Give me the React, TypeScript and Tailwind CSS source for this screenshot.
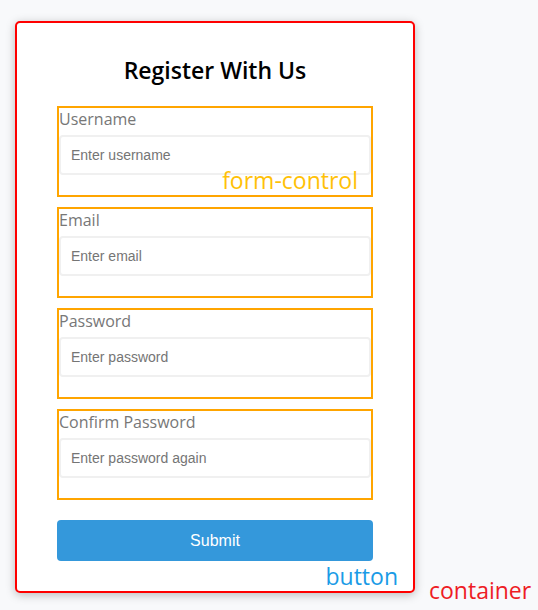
import React from 'react';

const fields = [
  { label: 'Username', placeholder: 'Enter username', type: 'text' },
  { label: 'Email', placeholder: 'Enter email', type: 'email' },
  { label: 'Password', placeholder: 'Enter password', type: 'password' },
  { label: 'Confirm Password', placeholder: 'Enter password again', type: 'password' },
];

const openSans = { fontFamily: '"Open Sans", "Noto Sans", sans-serif' };

function FormControl({
  label,
  placeholder,
  type,
  note,
}: {
  label: string;
  placeholder: string;
  type: string;
  note?: boolean;
}) {
  return (
    <div className="relative flex flex-col gap-[5px] border-2 border-[#ffa500] pb-[20px]">
      <label className="text-[16px] leading-[22px] text-[#777]" style={openSans}>
        {label}
      </label>
      <input
        type={type}
        placeholder={placeholder}
        className="h-[40px] w-full rounded-[4px] border-2 border-[#f0f0f0] px-[10px] font-['Liberation_Sans',Arial,sans-serif] text-[14px] text-[#333] outline-none placeholder:text-[#757575]"
      />
      {note && (
        <span
          className="absolute right-[13px] bottom-0 text-[23px] leading-[30px] text-[#ffc107]"
          style={openSans}
        >
          form-control
        </span>
      )}
    </div>
  );
}

export default function App() {
  return (
    <div className="relative flex min-h-[610px] w-full items-start bg-[#f8f9fb] pt-[21px] pl-[15px]">
      <div className="relative flex w-[400px] flex-col rounded-[5px] border-2 border-[#ff0000] bg-white px-[40px] pt-[30px] pb-[30px] shadow-[0_2px_10px_rgba(0,0,0,0.25)]">
        <h2
          className="mb-[19px] text-center text-[23px] leading-[34px] font-semibold text-black"
          style={openSans}
        >
          Register With Us
        </h2>
        <form className="flex flex-col gap-[10px]" onSubmit={(e) => e.preventDefault()}>
          {fields.map((f, i) => (
            <FormControl key={f.label} {...f} note={i === 0} />
          ))}
          <button
            type="submit"
            className="mt-[10px] h-[41px] w-full rounded-[4px] bg-[#3498db] font-['Liberation_Sans',Arial,sans-serif] text-[16px] text-white"
          >
            Submit
          </button>
        </form>
        <span
          className="absolute right-[15px] bottom-0 text-[23px] leading-[30px] text-[#1a9be6]"
          style={openSans}
        >
          button
        </span>
      </div>
      <span
        className="absolute top-[575px] left-[429px] text-[23px] leading-[30px] text-[#ee1c25]"
        style={openSans}
      >
        container
      </span>
    </div>
  );
}
